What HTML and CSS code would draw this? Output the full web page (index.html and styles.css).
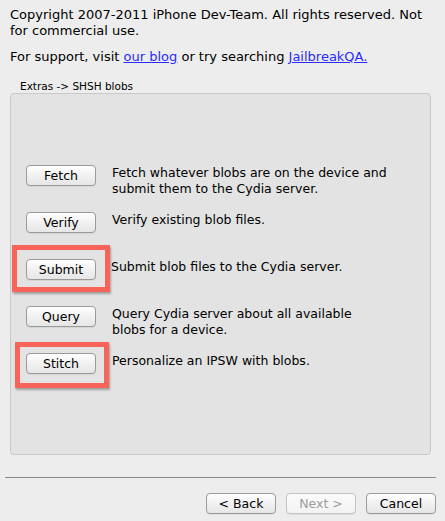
FILE: index.html
```html
<!DOCTYPE html>
<html lang="en">
<head>
    <meta charset="UTF-8">
    <title>Extras - SHSH blobs</title>
    <link rel="stylesheet" href="styles.css">
</head>
<body>
    <div class="window">
        <p class="intro">Copyright 2007-2011 iPhone Dev-Team. All rights reserved. Not<br>for commercial use.</p>
        <p class="support">For support, visit <a href="#">our blog</a> or try searching <a href="#">JailbreakQA.</a></p>

        <div class="group-label">Extras -&gt; SHSH blobs</div>
        <div class="group">
            <div class="row">
                <button type="button" class="btn">Fetch</button>
                <div class="desc">Fetch whatever blobs are on the device and<br>submit them to the Cydia server.</div>
            </div>
            <div class="row">
                <button type="button" class="btn">Verify</button>
                <div class="desc">Verify existing blob files.</div>
            </div>
            <div class="row">
                <span class="mark mark-submit"></span>
                <button type="button" class="btn">Submit</button>
                <div class="desc tight">Submit blob files to the Cydia server.</div>
            </div>
            <div class="row">
                <button type="button" class="btn">Query</button>
                <div class="desc">Query Cydia server about all available<br>blobs for a device.</div>
            </div>
            <div class="row">
                <span class="mark mark-stitch"></span>
                <button type="button" class="btn">Stitch</button>
                <div class="desc">Personalize an IPSW with blobs.</div>
            </div>
        </div>

        <hr class="separator">

        <div class="footer">
            <button type="button" class="btn">&lt; Back</button>
            <button type="button" class="btn" disabled>Next &gt;</button>
            <button type="button" class="btn">Cancel</button>
        </div>
    </div>
</body>
</html>
```

FILE: styles.css
```css
body {
    margin: 0;
    background-color: #ededed;
    font-family: "DejaVu Sans", "Liberation Sans", sans-serif;
    font-size: 13px;
    color: #000;
}
.window {
    width: 445px;
    height: 521px;
    overflow: hidden;
}
p {
    margin: 0;
    line-height: 16px;
}
.intro {
    padding: 7px 10px 0;
}
.support {
    padding: 10px 10px 0;
}
.support a {
    color: #2a2aff;
}
.group-label {
    margin: 14px 0 0 20px;
    font-size: 10.5px;
    line-height: 14px;
}
.group {
    margin: 0 14px 0 10px;
    height: 362px;
    background-color: #e3e3e3;
    border: 1px solid #c9c9c9;
    border-radius: 4px;
    padding: 71px 0 0 15px;
    box-sizing: border-box;
    display: flex;
    flex-direction: column;
    gap: 26px;
}
.row {
    position: relative;
    height: 21px;
    display: flex;
    align-items: flex-start;
    gap: 16px;
}
.btn {
    width: 70px;
    height: 21px;
    padding: 0;
    font-family: inherit;
    font-size: 12.5px;
    color: #000;
    background: linear-gradient(#ffffff, #f1f1f1 50%, #e6e6e6);
    border: 1px solid #9a9a9a;
    border-radius: 4px;
    box-shadow: 0 1px 0 rgba(0, 0, 0, 0.06);
    flex-shrink: 0;
}
.btn:disabled {
    color: #9c9c9c;
    border-color: #c4c4c4;
    background: linear-gradient(#fbfbfb, #f2f2f2);
}
.desc {
    font-size: 12.5px;
    line-height: 16px;
    white-space: nowrap;
}
.desc.tight {
    margin-left: -1px;
}
.mark {
    position: absolute;
    border: 5px solid #f9645a;
    box-shadow: 1px 2px 2px rgba(0, 0, 0, 0.3);
    box-sizing: border-box;
}
.mark-submit {
    left: -14px;
    top: -14px;
    width: 98px;
    height: 47px;
}
.mark-stitch {
    left: -11px;
    top: -11px;
    width: 94px;
    height: 46px;
}
.separator {
    margin: 22px 9px 0 5px;
    border: none;
    border-top: 1px solid #8c8c8c;
    height: 0;
}
.footer {
    display: flex;
    justify-content: flex-end;
    gap: 10px;
    margin: 15px 9px 0 0;
}
```
